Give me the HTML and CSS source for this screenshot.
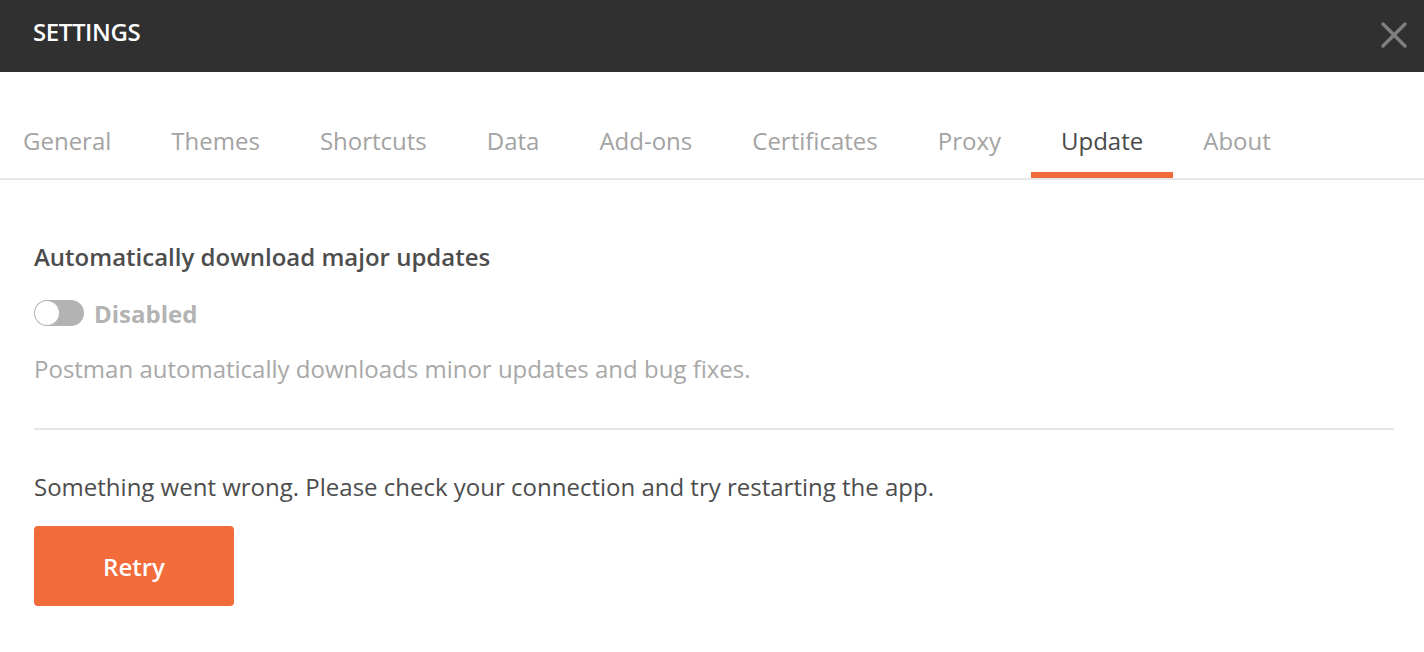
FILE: index.html
```html
<!DOCTYPE html>
<html lang="en">
<head>
  <meta charset="UTF-8" />
  <meta name="viewport" content="width=device-width, initial-scale=1.0" />
  <title>Settings</title>
  <link rel="stylesheet" href="styles.css">
</head>
<body>

  <header class="topbar">
    <div class="title">SETTINGS</div>
    <svg class="close" width="26" height="26" viewBox="0 0 26 26">
      <path d="M2 2 L24 24 M24 2 L2 24" stroke="#7f7f7f" stroke-width="3.4" stroke-linecap="round" fill="none" />
    </svg>
  </header>

  <!-- Abas -->
  <nav class="tabs">
    <div class="tab">General</div>
    <div class="tab">Themes</div>
    <div class="tab">Shortcuts</div>
    <div class="tab">Data</div>
    <div class="tab">Add-ons</div>
    <div class="tab">Certificates</div>
    <div class="tab">Proxy</div>
    <div class="tab active">Update</div>
    <div class="tab">About</div>
  </nav>

  <div class="content">
    <div class="heading">Automatically download major updates</div>

    <div class="toggle-row">
      <span class="toggle"><span class="knob"></span></span>
      <span class="toggle-label">Disabled</span>
    </div>

    <div class="hint">Postman automatically downloads minor updates and bug fixes.</div>

    <hr class="divider" />

    <div class="error">Something went wrong. Please check your connection and try restarting the app.</div>

    <button class="retry">Retry</button>
  </div>

</body>
</html>
```

FILE: styles.css
```css
body {
  margin: 0;
  font-family: "Open Sans", "Noto Sans", sans-serif;
  background: #fff;
  color: #505050;
}

.topbar {
  height: 72px;
  background: #303030;
  display: flex;
  align-items: center;
  justify-content: space-between;
  padding: 0 17px 0 33px;
}

.title {
  color: #fff;
  font-size: 24px;
  font-weight: 600;
  letter-spacing: -0.4px;
  margin-top: -10px;
}

.close {
  display: block;
  margin-top: -2px;
}

.tabs {
  display: flex;
  margin-left: -7px;
  border-bottom: 2px solid #e8e8e8;
}

.tab {
  padding: 51px 30px 13px;
  font-size: 24px;
  line-height: 36px;
  color: #a3a3a3;
  border-bottom: 6px solid transparent;
}

.tab.active {
  color: #4a4a4a;
  border-bottom-color: #f26b3a;
}

.content {
  padding: 0 30px 0 34px;
}

.heading {
  margin-top: 61px;
  font-size: 24px;
  line-height: 32px;
  font-weight: 600;
  color: #4d4d4d;
}

.toggle-row {
  margin-top: 26px;
  display: flex;
  align-items: center;
  gap: 10px;
  height: 28px;
}

.toggle {
  width: 50px;
  height: 26px;
  border-radius: 13px;
  background: #b3b3b3;
  display: flex;
  align-items: center;
  padding: 0 0 0 1px;
  box-sizing: border-box;
}

.knob {
  width: 24px;
  height: 24px;
  border-radius: 50%;
  background: #fff;
}

.toggle-label {
  font-size: 24px;
  font-weight: 700;
  color: #b3b3b3;
}

.hint {
  margin-top: 26px;
  font-size: 24px;
  line-height: 32px;
  color: #a8a8a8;
}

.divider {
  margin: 43px 0 0;
  border: 0;
  border-top: 2px solid #e6e6e6;
}

.error {
  margin-top: 41px;
  font-size: 24px;
  line-height: 32px;
  color: #4d4d4d;
}

.retry {
  margin-top: 23px;
  width: 200px;
  height: 80px;
  border: 0;
  border-radius: 4px;
  background: #f26b3a;
  color: #fff;
  font-family: "Open Sans", "Noto Sans", sans-serif;
  font-size: 24px;
  font-weight: 600;
}
```
